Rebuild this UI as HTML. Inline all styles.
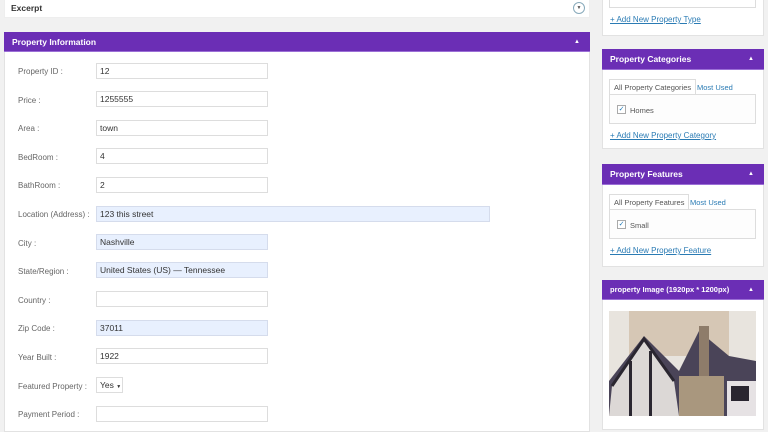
<!DOCTYPE html>
<html><head><meta charset="utf-8"><style>
*{box-sizing:border-box;margin:0;padding:0}
body{width:768px;height:416px;overflow:hidden;background:#f1f1f1;font-family:"Liberation Sans",sans-serif;position:relative;font-size:8px;color:#444}
.a{position:absolute}
.box{position:absolute;background:#fff;border:1px solid #e2e2e2}
.hd{position:absolute;background:#6b2eb5;color:#fff;font-weight:bold;font-size:8.5px;padding-left:8px;line-height:20px;border-bottom:1px solid #9b6fd6}
.hd .t{position:absolute;right:10px;top:0;font-size:6px}
.lb{position:absolute;left:18px;color:#666;font-size:8px}
.in{position:absolute;left:96px;width:172px;height:16px;border:1px solid #ddd;background:#fff;font-size:8.5px;line-height:14px;padding-left:3px;color:#333}
.in.f{background:#e8f0fe;border-color:#d5dcec}
.lk{position:absolute;color:#2a7bb4;text-decoration:underline;font-size:8px}
.tab{position:absolute;border:1px solid #ddd;font-size:7.5px;line-height:15px;padding:0 4px}
.cb{position:absolute;width:9px;height:9px;border:1px solid #aaa;background:#fff;color:#1e7ab8;font-size:7px;line-height:8px;text-align:center}
</style></head><body>
<div class="box" style="left:4px;top:-2px;width:586px;height:20px;border-color:#eee"></div>
<div class="a" style="left:11px;top:3px;font-weight:bold;font-size:8.5px;color:#333">Excerpt</div>
<div class="a" style="left:573px;top:2px;width:12px;height:12px;border:1px solid #8ab;border-radius:50%;font-size:5px;text-align:center;line-height:11px;color:#555">▼</div>

<div class="box" style="left:4px;top:32px;width:586px;height:400px"></div>
<div class="hd" style="left:4px;top:32px;width:586px;height:20px">Property Information<span class="t">▲</span></div>

<div class="lb" style="top:67px">Property ID :</div><div class="in" style="top:63px">12</div>
<div class="lb" style="top:96px">Price :</div><div class="in" style="top:91px">1255555</div>
<div class="lb" style="top:124px">Area :</div><div class="in" style="top:120px">town</div>
<div class="lb" style="top:153px">BedRoom :</div><div class="in" style="top:148px">4</div>
<div class="lb" style="top:181px">BathRoom :</div><div class="in" style="top:177px">2</div>
<div class="lb" style="top:210px">Location (Address) :</div><div class="in f" style="top:206px;width:394px">123 this street</div>
<div class="lb" style="top:239px">City :</div><div class="in f" style="top:234px">Nashville</div>
<div class="lb" style="top:267px">State/Region :</div><div class="in f" style="top:262px">United States (US) — Tennessee</div>
<div class="lb" style="top:296px">Country :</div><div class="in" style="top:291px"></div>
<div class="lb" style="top:324px">Zip Code :</div><div class="in f" style="top:320px">37011</div>
<div class="lb" style="top:353px">Year Built :</div><div class="in" style="top:348px">1922</div>
<div class="lb" style="top:382px">Featured Property :</div><div class="in" style="top:377px;width:27px">Yes <span style="font-size:5px">▼</span></div>
<div class="lb" style="top:410px">Payment Period :</div><div class="in" style="top:406px"></div>

<div class="box" style="left:602px;top:-2px;width:162px;height:38px"></div>
<div class="a" style="left:609px;top:-2px;width:147px;height:10px;border:1px solid #ddd"></div>
<div class="lk" style="left:610px;top:15px">+ Add New Property Type</div>

<div class="box" style="left:602px;top:49px;width:162px;height:100px"></div>
<div class="hd" style="left:602px;top:49px;width:162px;height:21px">Property Categories<span class="t">▲</span></div>
<div class="tab" style="left:609px;top:79px;border-bottom-color:#fff;color:#555">All Property Categories</div>
<div class="a" style="left:697px;top:83px;color:#2a7bb4;font-size:7.5px">Most Used</div>
<div class="a" style="left:609px;top:94px;width:147px;height:30px;border:1px solid #ddd;background:#fdfdfd"></div>
<div class="cb" style="left:617px;top:105px">✓</div><div class="a" style="left:630px;top:106px;color:#555;font-size:7.5px">Homes</div>
<div class="lk" style="left:610px;top:131px">+ Add New Property Category</div>

<div class="box" style="left:602px;top:164px;width:162px;height:103px"></div>
<div class="hd" style="left:602px;top:164px;width:162px;height:21px">Property Features<span class="t">▲</span></div>
<div class="tab" style="left:609px;top:194px;border-bottom-color:#fff;color:#555">All Property Features</div>
<div class="a" style="left:690px;top:198px;color:#2a7bb4;font-size:7.5px">Most Used</div>
<div class="a" style="left:609px;top:209px;width:147px;height:30px;border:1px solid #ddd;background:#fdfdfd"></div>
<div class="cb" style="left:617px;top:220px">✓</div><div class="a" style="left:630px;top:221px;color:#555;font-size:7.5px">Small</div>
<div class="lk" style="left:610px;top:246px">+ Add New Property Feature</div>

<div class="box" style="left:602px;top:280px;width:162px;height:150px"></div>
<div class="hd" style="left:602px;top:280px;width:162px;height:20px;font-size:7.5px">property Image (1920px * 1200px)<span class="t">▲</span></div>
<svg class="a" style="left:609px;top:311px" width="147" height="105" viewBox="0 0 147 105">
<rect width="147" height="105" fill="#e8e4de"/>
<rect x="20" y="0" width="100" height="45" fill="#c9b49a" opacity=".6"/>
<polygon points="0,105 0,70 35,25 70,60 90,20 120,45 147,50 147,105" fill="#4a4458"/>
<polygon points="0,105 3,75 35,28 65,70 70,105" fill="#dcd8d6"/>
<polyline points="3,75 35,28 65,70" fill="none" stroke="#2a2630" stroke-width="3"/>
<rect x="20" y="50" width="3" height="55" fill="#2a2630"/><rect x="40" y="40" width="3" height="65" fill="#2a2630"/>
<rect x="70" y="65" width="45" height="40" fill="#a9977e"/>
<rect x="90" y="15" width="10" height="50" fill="#8e7c6a"/>
<rect x="118" y="70" width="29" height="35" fill="#e6e2e4"/><rect x="122" y="75" width="18" height="15" fill="#2a2630"/>
</svg>
</body></html>
